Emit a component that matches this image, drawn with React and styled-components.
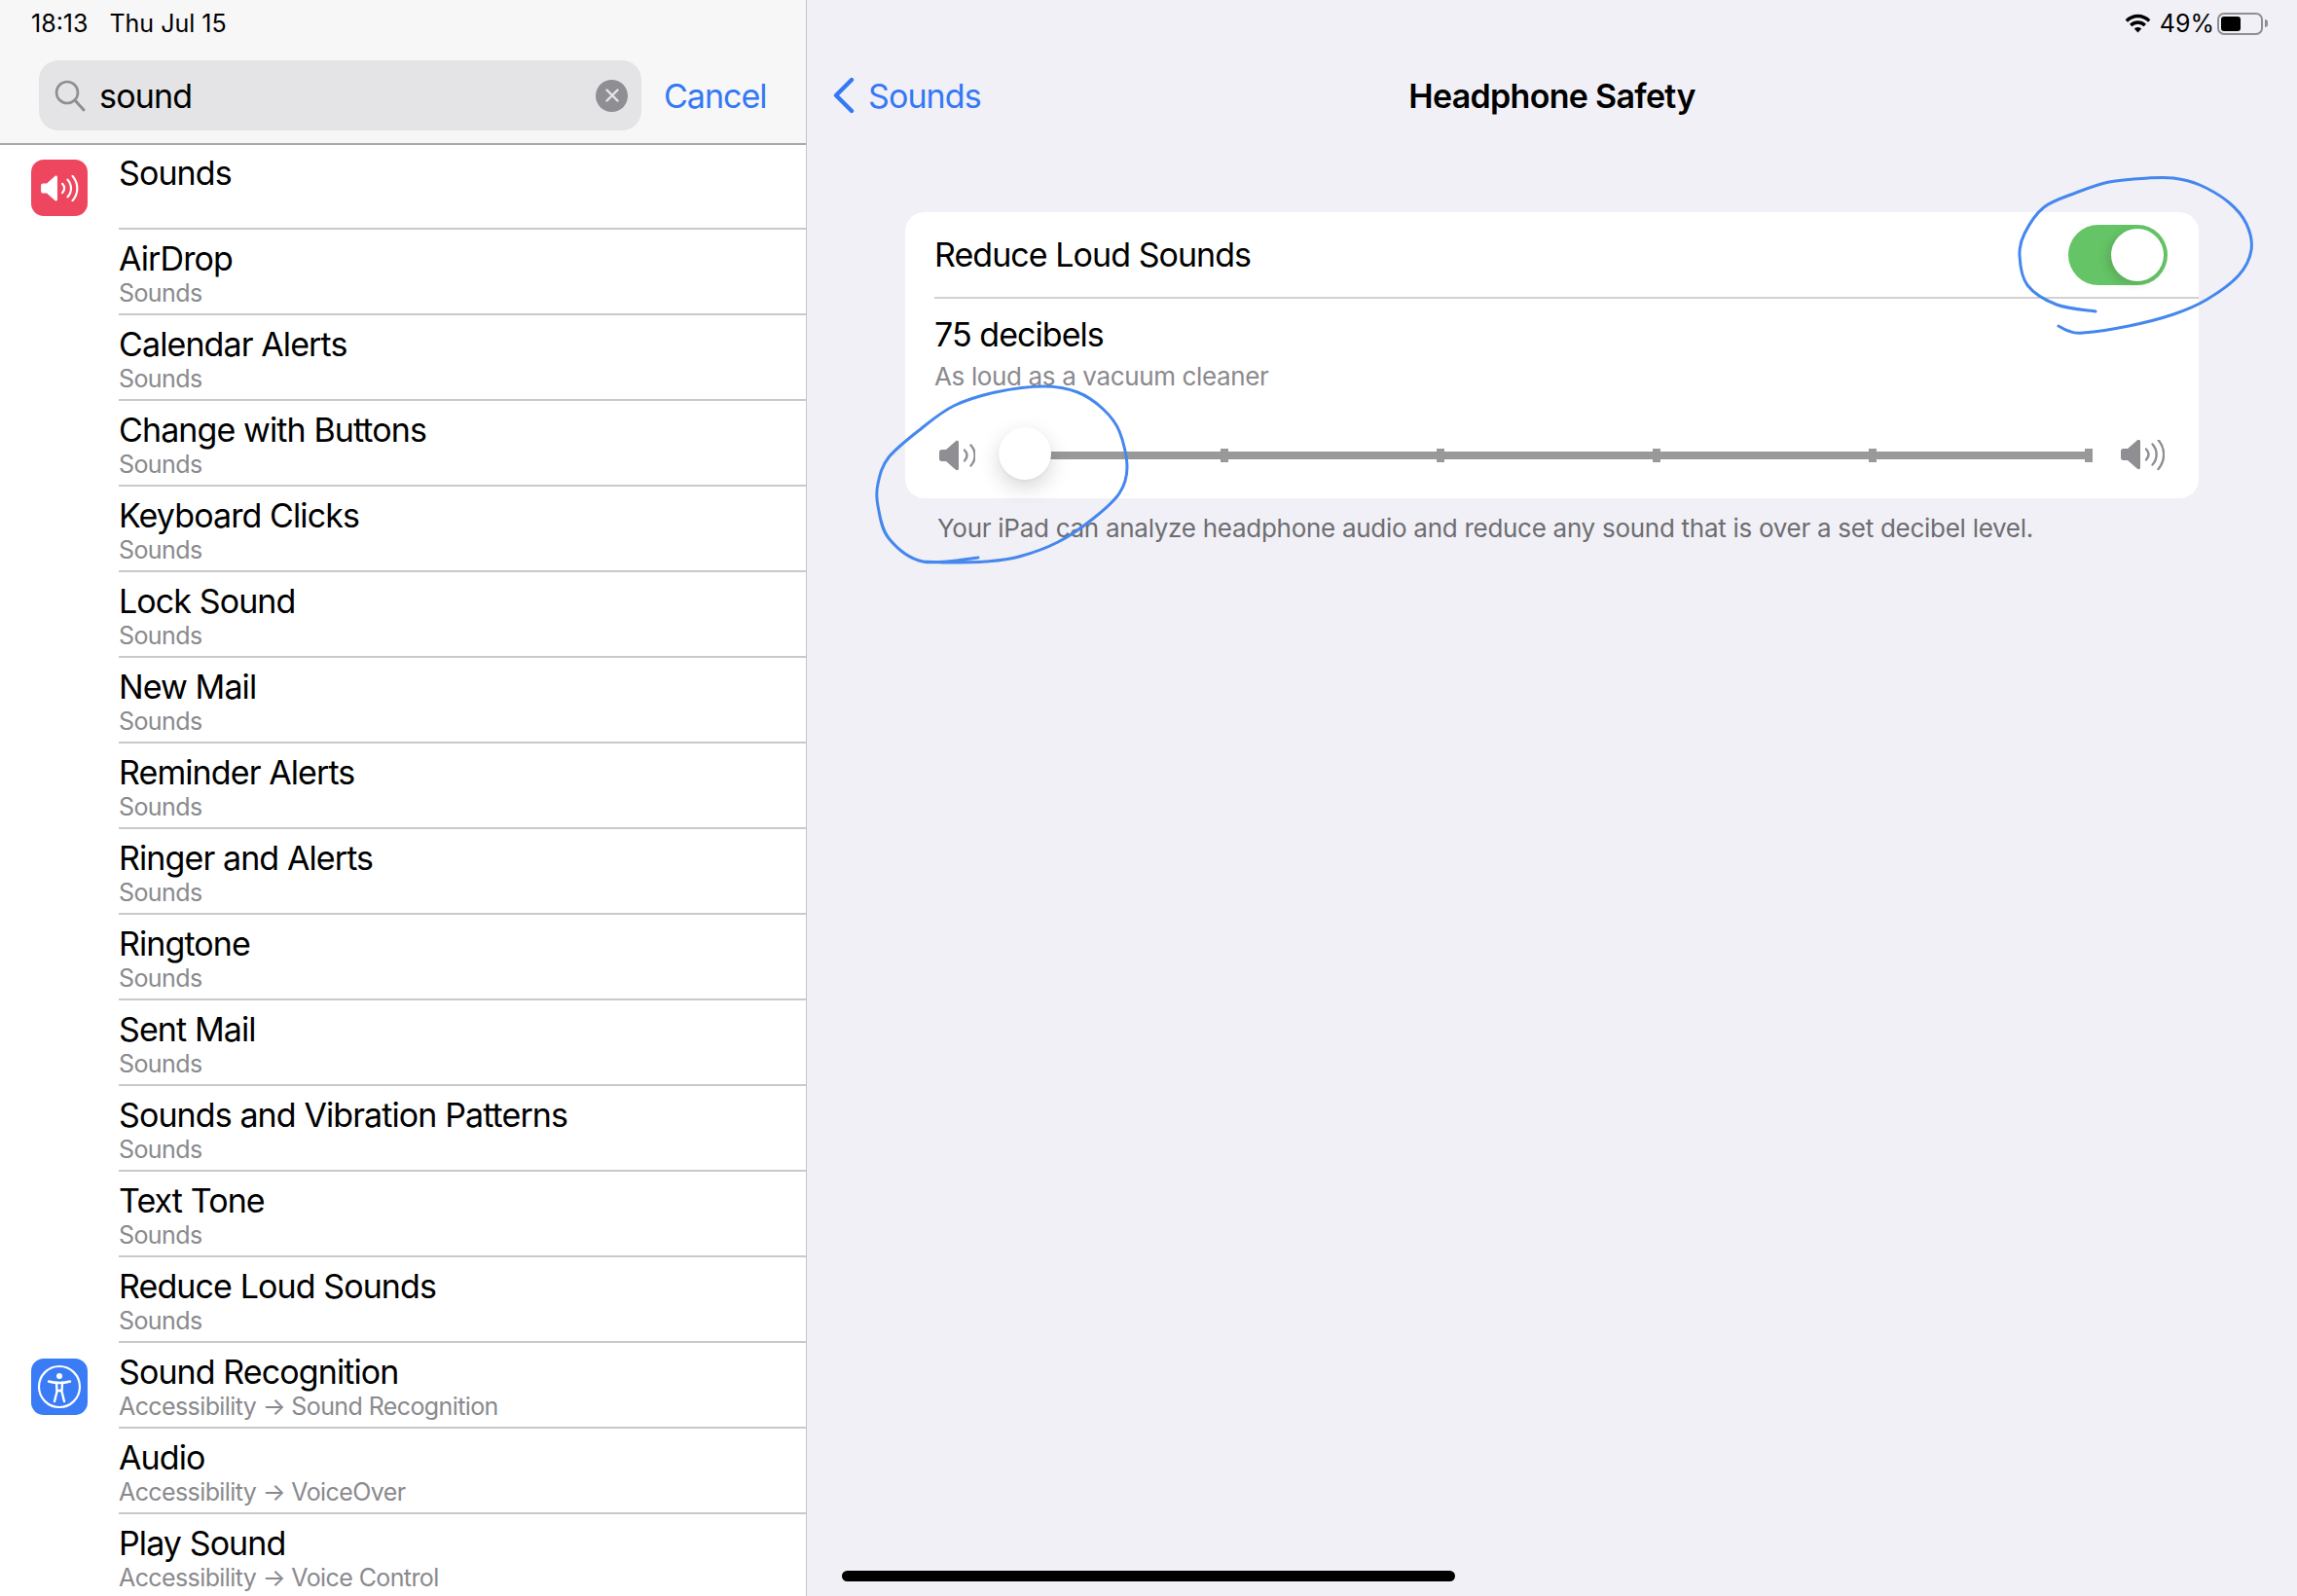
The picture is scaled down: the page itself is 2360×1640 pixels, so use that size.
import React from 'react';
import styled, { createGlobalStyle } from 'styled-components';

const GlobalStyle = createGlobalStyle`
  html, body {
    margin: 0;
    padding: 0;
    background: #f1f0f6;
  }
  * {
    box-sizing: border-box;
  }
`;

const results = [
  { title: 'Sounds', icon: 'sounds' },
  { title: 'AirDrop', sub: 'Sounds' },
  { title: 'Calendar Alerts', sub: 'Sounds' },
  { title: 'Change with Buttons', sub: 'Sounds' },
  { title: 'Keyboard Clicks', sub: 'Sounds' },
  { title: 'Lock Sound', sub: 'Sounds' },
  { title: 'New Mail', sub: 'Sounds' },
  { title: 'Reminder Alerts', sub: 'Sounds' },
  { title: 'Ringer and Alerts', sub: 'Sounds' },
  { title: 'Ringtone', sub: 'Sounds' },
  { title: 'Sent Mail', sub: 'Sounds' },
  { title: 'Sounds and Vibration Patterns', sub: 'Sounds' },
  { title: 'Text Tone', sub: 'Sounds' },
  { title: 'Reduce Loud Sounds', sub: 'Sounds' },
  { title: 'Sound Recognition', sub: 'Accessibility → Sound Recognition', icon: 'access' },
  { title: 'Audio', sub: 'Accessibility → VoiceOver' },
  { title: 'Play Sound', sub: 'Accessibility → Voice Control' },
];

// pen circles drawn over the screenshot, in page pixels
const toggleCircle = [
  [2153, 320], [2113, 313], [2083, 293], [2075, 263], [2080, 240], [2100, 213], [2133, 198],
  [2167, 187], [2207, 183], [2233, 183], [2260, 190], [2290, 208], [2308, 230], [2313, 257],
  [2300, 283], [2267, 308], [2233, 323], [2187, 335], [2140, 342], [2125, 340], [2115, 335],
];
const sliderCircle = [
  [1005, 573], [948, 577], [913, 553], [902, 520], [902, 497], [913, 470], [947, 440], [980, 417],
  [1023, 403], [1073, 397], [1107, 403], [1133, 420], [1150, 443], [1158, 480], [1150, 507],
  [1123, 533], [1087, 557], [1047, 572], [1013, 577], [973, 578], [948, 577],
];

const smoothPath = (pts) => {
  let d = `M${pts[0][0]} ${pts[0][1]}`;
  for (let i = 0; i < pts.length - 1; i++) {
    const p0 = pts[i - 1] || pts[i];
    const p1 = pts[i];
    const p2 = pts[i + 1];
    const p3 = pts[i + 2] || p2;
    const c1 = [p1[0] + (p2[0] - p0[0]) / 6, p1[1] + (p2[1] - p0[1]) / 6];
    const c2 = [p2[0] - (p3[0] - p1[0]) / 6, p2[1] - (p3[1] - p1[1]) / 6];
    d += ` C${c1[0]} ${c1[1]} ${c2[0]} ${c2[1]} ${p2[0]} ${p2[1]}`;
  }
  return d;
};

const waveArcs = [
  'M26 10.500c3.200 3.500 3.200 7.500 0 11',
  'M32.500 5.500c5.500 6 5.500 15 0 21',
  'M38.500 1c7.500 9 7.500 21 0 30',
];

const Speaker = ({ arcs, width, height, color, viewWidth, weight = 2.4, shift = 0 }) => (
  <svg width={width} height={height} viewBox={`0 ${shift} ${viewWidth} 32`} fill="none">
    <path
      d="M2.500 10H7L17 1.200c1.200-1 3-.4 3 1.300v27c0 1.700-1.800 2.300-3 1.300L7 22H2.500C1 22 0 21 0 19.500v-7C0 11 1 10 2.500 10z"
      fill={color}
    />
    {arcs.map((i) => (
      <path key={i} d={waveArcs[i]} stroke={color} strokeWidth={weight} strokeLinecap="round" />
    ))}
  </svg>
);

const AccessibilityGlyph = () => (
  <svg width="58" height="58" viewBox="0 0 58 58" fill="none">
    <circle cx="29" cy="29" r="21" stroke="#fff" strokeWidth="2.200" />
    <circle cx="29" cy="18" r="3" fill="#fff" />
    <path
      d="M18 23.500c3.500 1 7.300 1.500 11 1.500s7.500-.5 11-1.500"
      stroke="#fff"
      strokeWidth="2.400"
      strokeLinecap="round"
    />
    <path
      d="M26 25l.5 9-2.500 10M32 25l-.5 9 2.500 10M26.500 33h5"
      stroke="#fff"
      strokeWidth="2.400"
      strokeLinecap="round"
      strokeLinejoin="round"
    />
  </svg>
);

const App = () => (
  <Screen>
    <GlobalStyle />
    <Sidebar>
      <SearchHeader>
        <StatusBar>
          <span>18:13</span>
          <span>Thu Jul 15</span>
        </StatusBar>
        <SearchRow>
          <SearchField>
            <svg width="32" height="33" viewBox="0 0 32 33" fill="none">
              <circle cx="13" cy="13" r="11" stroke="#8e8e93" strokeWidth="2.600" />
              <path d="M21 21l9 10" stroke="#8e8e93" strokeWidth="3" strokeLinecap="round" />
            </svg>
            <SearchText>sound</SearchText>
            <ClearButton>
              <svg width="14" height="14" viewBox="0 0 14 14" fill="none">
                <path d="M1.500 1.500l11 11M12.500 1.500l-11 11" stroke="#e6e6e8" strokeWidth="2.400" strokeLinecap="round" />
              </svg>
            </ClearButton>
          </SearchField>
          <CancelLink>Cancel</CancelLink>
        </SearchRow>
      </SearchHeader>
      <ResultList>
        {results.map((r) => (
          <ResultRow key={r.title}>
            <IconSlot>
              {r.icon === 'sounds' && (
                <AppIcon $bg="#ee465e">
                  <Speaker arcs={[0, 1, 2]} width={39} height={27} viewWidth={46} weight={2.6} color="#fff" />
                </AppIcon>
              )}
              {r.icon === 'access' && (
                <AppIcon $bg="#3a7bf6">
                  <AccessibilityGlyph />
                </AppIcon>
              )}
            </IconSlot>
            <ResultText>
              <ResultTitle>{r.title}</ResultTitle>
              {r.sub && <ResultSub>{r.sub}</ResultSub>}
            </ResultText>
          </ResultRow>
        ))}
      </ResultList>
    </Sidebar>

    <Detail>
      <DetailStatus>
        <svg width="27" height="20" viewBox="0 0 27 20" fill="none">
          <path d="M1.800 7.500C8.500 .8 18.500 .8 25.200 7.500" stroke="#000" strokeWidth="3.400" />
          <path d="M6.200 12C10.300 8 16.700 8 20.800 12" stroke="#000" strokeWidth="3.400" />
          <path d="M9.800 15.600c2.100-2 5.300-2 7.400 0l-3.700 3.900z" fill="#000" />
        </svg>
        <BatteryText>49%</BatteryText>
        <Battery>
          <BatteryFill style={{ width: '52%' }} />
        </Battery>
        <BatteryNub />
      </DetailStatus>
      <NavBar>
        <BackLink>
          <svg width="24" height="38" viewBox="0 0 24 38" fill="none">
            <path d="M20 3L4 19l16 16" stroke="#3478f6" strokeWidth="4.400" strokeLinecap="round" strokeLinejoin="round" />
          </svg>
          Sounds
        </BackLink>
        <NavTitle>Headphone Safety</NavTitle>
      </NavBar>

      <Card>
        <ToggleRow>
          <RowLabel>Reduce Loud Sounds</RowLabel>
          <Switch>
            <SwitchKnob />
          </Switch>
        </ToggleRow>
        <LevelBlock>
          <RowLabel>75 decibels</RowLabel>
          <LevelHint>As loud as a vacuum cleaner</LevelHint>
        </LevelBlock>
        <SliderRow>
          <Speaker arcs={[0, 1]} width={37} height={32} viewWidth={37} color="#8e8e93" />
          <Track>
            {[0, 1, 2, 3, 4, 5].map((i) => (
              <Tick key={i} />
            ))}
            <Knob />
          </Track>
          <Speaker arcs={[0, 1, 2]} width={45} height={32} viewWidth={45} shift={1} color="#8e8e93" />
        </SliderRow>
      </Card>
      <Caption>Your iPad can analyze headphone audio and reduce any sound that is over a set decibel level.</Caption>
    </Detail>

    <HomeIndicator />

    <PenLayer width="2360" height="1640" viewBox="0 0 2360 1640" fill="none">
      <path d={smoothPath(toggleCircle)} stroke="#4487ee" strokeWidth="3" strokeLinecap="round" />
      <path d={smoothPath(sliderCircle)} stroke="#4487ee" strokeWidth="3" strokeLinecap="round" />
    </PenLayer>
  </Screen>
);

const Screen = styled.div`
  position: relative;
  display: flex;
  width: 2360px;
  height: 1640px;
  overflow: hidden;
  background: #f1f0f6;
  color: #000;
  font-family: Inter, "Liberation Sans", sans-serif;
`;

const Sidebar = styled.div`
  flex: none;
  width: 829px;
  height: 100%;
  overflow: hidden;
  background: #fff;
  border-right: 1px solid #c6c6c8;
`;

const SearchHeader = styled.div`
  height: 149px;
  background: #f7f7f7;
  border-bottom: 2px solid #a9a9ac;
`;

const StatusBar = styled.div`
  display: flex;
  gap: 22px;
  height: 48px;
  align-items: center;
  padding-left: 32px;
  font-size: 25px;
`;

const SearchRow = styled.div`
  display: flex;
  align-items: center;
  margin-top: 14px;
  padding-left: 40px;
`;

const SearchField = styled.div`
  display: flex;
  align-items: center;
  width: 619px;
  height: 72px;
  padding: 0 14px 0 16px;
  border-radius: 20px;
  background: #e4e4e6;
`;

const SearchText = styled.span`
  flex: 1;
  margin-left: 14px;
  font-size: 34px;
  letter-spacing: -0.8px;
`;

const ClearButton = styled.span`
  display: flex;
  align-items: center;
  justify-content: center;
  width: 33px;
  height: 33px;
  border-radius: 50%;
  background: #8e8e93;
`;

const CancelLink = styled.span`
  margin-left: 23px;
  font-size: 34px;
  letter-spacing: -1px;
  color: #3478f6;
`;

const ResultList = styled.div`
  display: flex;
  flex-direction: column;
  margin-top: -1px;
`;

const ResultRow = styled.div`
  display: flex;
  flex: none;
  height: 88px;
`;

const IconSlot = styled.div`
  flex: none;
  width: 122px;
  padding: 16px 0 0 32px;
`;

const AppIcon = styled.div`
  display: flex;
  align-items: center;
  justify-content: center;
  width: 58px;
  height: 58px;
  border-radius: 13px;
  background: ${(p) => p.$bg};
`;

const ResultText = styled.div`
  flex: 1;
  padding-top: 9px;
  border-bottom: 2px solid #c9c9cc;
`;

const ResultTitle = styled.div`
  font-size: 34px;
  line-height: 41px;
  letter-spacing: -0.9px;
`;

const ResultSub = styled.div`
  font-size: 25px;
  line-height: 30px;
  letter-spacing: -0.6px;
  color: #8a8a8e;
`;

const Detail = styled.div`
  flex: 1;
  display: flex;
  flex-direction: column;
  min-width: 0;
`;

const DetailStatus = styled.div`
  display: flex;
  align-items: center;
  justify-content: flex-end;
  height: 48px;
  padding-right: 30px;
`;

const BatteryText = styled.span`
  margin: 0 3px 0 9px;
  font-size: 25px;
`;

const Battery = styled.div`
  width: 47px;
  height: 23px;
  padding: 2px;
  border: 2px solid #8e8e93;
  border-radius: 7px;
`;

const BatteryFill = styled.div`
  height: 100%;
  border-radius: 3px;
  background: #000;
`;

const BatteryNub = styled.div`
  width: 3px;
  height: 8px;
  margin-left: 2px;
  border-radius: 0 3px 3px 0;
  background: #8e8e93;
`;

const NavBar = styled.div`
  display: grid;
  grid-template-columns: 1fr auto 1fr;
  align-items: center;
  height: 100px;
  padding: 0 26px;
`;

const BackLink = styled.span`
  display: flex;
  align-items: center;
  gap: 13px;
  font-size: 34px;
  letter-spacing: -0.9px;
  color: #3478f6;
`;

const NavTitle = styled.span`
  font-size: 34px;
  font-weight: 600;
  letter-spacing: -0.7px;
`;

const Card = styled.div`
  display: flex;
  flex-direction: column;
  height: 294px;
  margin: 70px 101px 0;
  border-radius: 20px;
  background: #fff;
`;

const ToggleRow = styled.div`
  display: flex;
  align-items: center;
  justify-content: space-between;
  flex: none;
  height: 89px;
  margin-left: 30px;
  padding-right: 32px;
  border-bottom: 2px solid #d1d1d4;
`;

const RowLabel = styled.div`
  font-size: 34px;
  line-height: 40px;
  letter-spacing: -0.95px;
`;

const Switch = styled.div`
  display: flex;
  align-items: center;
  justify-content: flex-end;
  width: 102px;
  height: 62px;
  padding-right: 4px;
  border-radius: 31px;
  background: #65c466;
`;

const SwitchKnob = styled.div`
  width: 54px;
  height: 54px;
  border-radius: 50%;
  background: #fff;
  box-shadow: -4px 3px 10px rgba(0, 0, 0, 0.12);
`;

const LevelBlock = styled.div`
  padding: 17px 0 0 30px;
`;

const LevelHint = styled.div`
  margin-top: 6px;
  font-size: 26px;
  line-height: 34px;
  letter-spacing: -0.36px;
  color: #8a8a8e;
`;

const SliderRow = styled.div`
  display: flex;
  align-items: center;
  margin-top: 48px;
  padding: 0 35px;
`;

const Track = styled.div`
  position: relative;
  flex: 1;
  display: flex;
  justify-content: space-between;
  height: 14px;
  margin: 0 29px 0 30px;

  &::before {
    content: '';
    position: absolute;
    left: 0;
    right: 0;
    top: 3px;
    height: 8px;
    background: #999;
  }
`;

const Tick = styled.span`
  position: relative;
  width: 8px;
  height: 14px;
  background: #999;
`;

const Knob = styled.div`
  position: absolute;
  left: -6px;
  top: -22px;
  width: 54px;
  height: 54px;
  border-radius: 50%;
  background: #fff;
  box-shadow: 0 8px 22px rgba(0, 0, 0, 0.16), 0 1px 3px rgba(0, 0, 0, 0.05);
`;

const Caption = styled.div`
  margin: 14px 0 0 134px;
  font-size: 26px;
  line-height: 34px;
  letter-spacing: -0.28px;
  color: #6d6d72;
`;

const HomeIndicator = styled.div`
  position: absolute;
  left: 865px;
  bottom: 15px;
  width: 630px;
  height: 11px;
  border-radius: 6px;
  background: #000;
`;

const PenLayer = styled.svg`
  position: absolute;
  left: 0;
  top: 0;
  pointer-events: none;
`;

export default App;
